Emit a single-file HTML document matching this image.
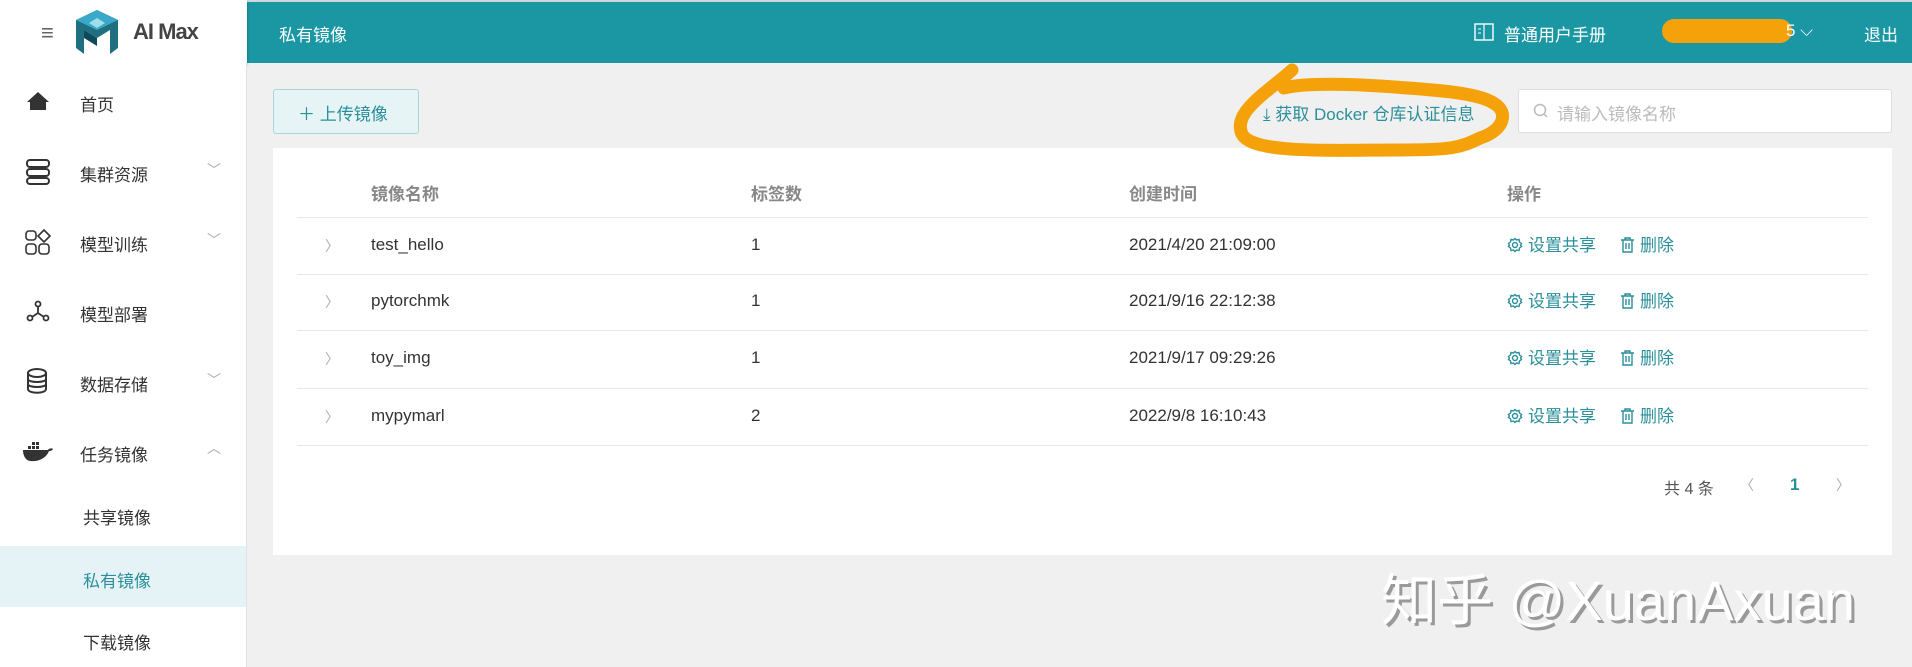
<!DOCTYPE html>
<html><head><meta charset="utf-8"><style>
*{margin:0;padding:0;box-sizing:border-box}
body{width:1912px;height:667px;overflow:hidden;background:#f0f0f0;font-family:"Liberation Sans","Noto Sans CJK SC",sans-serif;font-size:17px;color:#333;position:relative}
.a{position:absolute;white-space:nowrap}
.top{position:absolute;left:0;top:0;width:1912px;height:63px;background:#1a97a3;border-top:2px solid #cfd8da}
.logo{position:absolute;left:0;top:0;width:247px;height:63px;background:#fff;box-shadow:0 2px 3px rgba(0,0,0,.3)}
.side{position:absolute;left:0;top:63px;width:247px;height:604px;background:#fff;border-right:1px solid #e3e3e3}
.card{position:absolute;left:273px;top:148px;width:1619px;height:407px;background:#fff}
.line{position:absolute;left:297px;width:1571px;height:1px;background:#e8e8e8}
.teal{color:#2a8f9a}
.chev{color:#aaa;font-size:14px}
.op svg{vertical-align:-2px;margin-right:5px}
</style></head><body>
<div class="top"></div>
<div class="logo">
 <div class="a" style="left:41px;top:20px;font-size:22px;color:#666">≡</div>
 <svg class="a" style="left:72px;top:8px" width="50" height="50" viewBox="0 0 50 50">
  <polygon points="25,2 46,12 46,40 38,46 38,22 25,30 12,22 12,46 4,40 4,12" fill="#1f6f80"/>
  <polygon points="25,2 46,12 25,22 4,12" fill="#3aa9c9"/>
  <polygon points="25,10 33,15 25,20 17,15" fill="#9de0ea"/>
  <polygon points="12,22 25,30 25,38 12,30" fill="#0f4a5a"/>
 </svg>
 <div class="a" style="left:133px;top:19px;font-size:22px;font-weight:bold;color:#444;letter-spacing:-1px">AI Max</div>
</div>
<div class="a" style="left:279px;top:21px;color:#fff">私有镜像</div>
<svg class="a" style="left:1474px;top:23px" width="20" height="18" viewBox="0 0 20 18"><rect x="1" y="1" width="18" height="16" fill="none" stroke="#fff" stroke-width="1.4"/><line x1="10" y1="1" x2="10" y2="17" stroke="#fff" stroke-width="1.2"/><line x1="4" y1="6" x2="7" y2="6" stroke="#fff"/><line x1="4" y1="10" x2="7" y2="10" stroke="#fff"/></svg>
<div class="a" style="left:1504px;top:21px;color:#fff">普通用户手册</div>
<div class="a" style="left:1662px;top:19px;width:130px;height:24px;background:#f5a20a;border-radius:12px"></div>
<div class="a" style="left:1786px;top:21px;color:#fff">5 ⌵</div>
<div class="a" style="left:1864px;top:21px;color:#fff">退出</div>

<div class="side">
 <svg class="a" style="left:26px;top:28px" width="24" height="20" viewBox="0 0 24 20"><path d="M12 1 L23 11 L20 11 L20 19 L4 19 L4 11 L1 11Z M9 19 L9 13 L15 13 L15 19" fill="#333"/></svg>
 <div class="a" style="left:80px;top:28px">首页</div>
 <svg class="a" style="left:25px;top:96px" width="26" height="26" viewBox="0 0 26 26" fill="none" stroke="#333" stroke-width="2"><rect x="2" y="1" width="22" height="7" rx="3"/><rect x="2" y="10" width="22" height="7" rx="3"/><rect x="2" y="19" width="22" height="6" rx="3"/></svg>
 <div class="a" style="left:80px;top:98px">集群资源</div><div class="a chev" style="left:207px;top:97px">﹀</div>
 <svg class="a" style="left:25px;top:166px" width="26" height="26" viewBox="0 0 26 26" fill="none" stroke="#333" stroke-width="1.6"><rect x="1" y="2" width="10" height="9" rx="3"/><path d="M19 1 L25 7 L19 13 L13 7Z"/><rect x="1" y="15" width="10" height="10" rx="3"/><rect x="14" y="15" width="10" height="10" rx="3"/></svg>
 <div class="a" style="left:80px;top:168px">模型训练</div><div class="a chev" style="left:207px;top:167px">﹀</div>
 <svg class="a" style="left:26px;top:237px" width="24" height="22" viewBox="0 0 24 22" fill="none" stroke="#333" stroke-width="1.8"><circle cx="12" cy="4" r="2.5"/><circle cx="4" cy="18" r="2.5"/><circle cx="20" cy="18" r="2.5"/><path d="M12 7 L12 13 M12 13 L6 17 M12 13 L18 17"/></svg>
 <div class="a" style="left:80px;top:238px">模型部署</div>
 <svg class="a" style="left:26px;top:305px" width="22" height="26" viewBox="0 0 22 26" fill="none" stroke="#333" stroke-width="2"><ellipse cx="11" cy="5" rx="9" ry="4"/><path d="M2 5 V21 C2 26 20 26 20 21 V5 M2 11 C2 15 20 15 20 11 M2 16 C2 20 20 20 20 16"/></svg>
 <div class="a" style="left:80px;top:308px">数据存储</div><div class="a chev" style="left:207px;top:307px">﹀</div>
 <svg class="a" style="left:22px;top:377px" width="32" height="22" viewBox="0 0 32 22" fill="#333"><rect x="6" y="6" width="3" height="3"/><rect x="10" y="6" width="3" height="3"/><rect x="14" y="6" width="3" height="3"/><rect x="10" y="2" width="3" height="3"/><rect x="14" y="2" width="3" height="3"/><path d="M1 10 H26 C27 8 30 8 31 9 C30 11 28 11 27 11 C24 19 15 22 8 21 C3 20 1 15 1 10Z"/></svg>
 <div class="a" style="left:80px;top:378px">任务镜像</div><div class="a chev" style="left:207px;top:375px">︿</div>
 <div class="a" style="left:83px;top:441px">共享镜像</div>
 <div class="a" style="left:0;top:483px;width:246px;height:61px;background:#e6f3f6"></div>
 <div class="a teal" style="left:83px;top:504px">私有镜像</div>
 <div class="a" style="left:83px;top:566px">下载镜像</div>
</div>

<div class="a" style="left:273px;top:89px;width:146px;height:45px;background:#e6f4f6;border:1px solid #a9d6db;border-radius:3px"></div>
<div class="a teal" style="left:298px;top:100px">＋ 上传镜像</div>
<div class="a teal" style="left:1263px;top:100px">⤓ 获取 Docker 仓库认证信息</div>
<div class="a" style="left:1518px;top:89px;width:374px;height:44px;background:#fff;border:1px solid #ddd;border-radius:3px"></div>
<svg class="a" style="left:1533px;top:103px" width="16" height="16" viewBox="0 0 16 16" fill="none" stroke="#bbb" stroke-width="1.5"><circle cx="7" cy="7" r="5.5"/><path d="M11 11 L14 14"/></svg>
<div class="a" style="left:1557px;top:100px;color:#bbb">请输入镜像名称</div>

<div class="card"></div>
<div style="color:#888;font-weight:bold">
<div class="a" style="left:371px;top:180px">镜像名称</div>
<div class="a" style="left:751px;top:180px">标签数</div>
<div class="a" style="left:1129px;top:180px">创建时间</div>
<div class="a" style="left:1507px;top:180px">操作</div>
</div>
<div class="line" style="top:217px"></div>
<div class="line" style="top:274px"></div>
<div class="line" style="top:330px"></div>
<div class="line" style="top:388px"></div>
<div class="line" style="top:445px"></div>

<div class="a chev" style="left:325px;top:236px">〉</div><div class="a" style="left:371px;top:235px">test_hello</div><div class="a" style="left:751px;top:235px">1</div><div class="a" style="left:1129px;top:235px">2021/4/20 21:09:00</div>
<div class="a chev" style="left:325px;top:292px">〉</div><div class="a" style="left:371px;top:291px">pytorchmk</div><div class="a" style="left:751px;top:291px">1</div><div class="a" style="left:1129px;top:291px">2021/9/16 22:12:38</div>
<div class="a chev" style="left:325px;top:349px">〉</div><div class="a" style="left:371px;top:348px">toy_img</div><div class="a" style="left:751px;top:348px">1</div><div class="a" style="left:1129px;top:348px">2021/9/17 09:29:26</div>
<div class="a chev" style="left:325px;top:407px">〉</div><div class="a" style="left:371px;top:406px">mypymarl</div><div class="a" style="left:751px;top:406px">2</div><div class="a" style="left:1129px;top:406px">2022/9/8 16:10:43</div>

<div class="teal op">
<div class="a" style="left:1507px;top:231px"><svg width="16" height="16" viewBox="0 0 16 16" fill="none" stroke="#2a8f9a" stroke-width="1.4"><circle cx="8" cy="8" r="2.5"/><path d="M8 1.5 L9.5 3 L12 2.5 L12.5 5 L14.5 6.5 L13.5 8 L14.5 9.5 L12.5 11 L12 13.5 L9.5 13 L8 14.5 L6.5 13 L4 13.5 L3.5 11 L1.5 9.5 L2.5 8 L1.5 6.5 L3.5 5 L4 2.5 L6.5 3Z"/></svg>设置共享</div>
<div class="a" style="left:1620px;top:231px"><svg width="15" height="16" viewBox="0 0 15 16" fill="none" stroke="#2a8f9a" stroke-width="1.4"><path d="M1 3 H14 M5 3 V1 H10 V3 M3 3 V15 H12 V3 M6 6 V12 M9 6 V12"/></svg>删除</div>
<div class="a" style="left:1507px;top:287px"><svg width="16" height="16" viewBox="0 0 16 16" fill="none" stroke="#2a8f9a" stroke-width="1.4"><circle cx="8" cy="8" r="2.5"/><path d="M8 1.5 L9.5 3 L12 2.5 L12.5 5 L14.5 6.5 L13.5 8 L14.5 9.5 L12.5 11 L12 13.5 L9.5 13 L8 14.5 L6.5 13 L4 13.5 L3.5 11 L1.5 9.5 L2.5 8 L1.5 6.5 L3.5 5 L4 2.5 L6.5 3Z"/></svg>设置共享</div>
<div class="a" style="left:1620px;top:287px"><svg width="15" height="16" viewBox="0 0 15 16" fill="none" stroke="#2a8f9a" stroke-width="1.4"><path d="M1 3 H14 M5 3 V1 H10 V3 M3 3 V15 H12 V3 M6 6 V12 M9 6 V12"/></svg>删除</div>
<div class="a" style="left:1507px;top:344px"><svg width="16" height="16" viewBox="0 0 16 16" fill="none" stroke="#2a8f9a" stroke-width="1.4"><circle cx="8" cy="8" r="2.5"/><path d="M8 1.5 L9.5 3 L12 2.5 L12.5 5 L14.5 6.5 L13.5 8 L14.5 9.5 L12.5 11 L12 13.5 L9.5 13 L8 14.5 L6.5 13 L4 13.5 L3.5 11 L1.5 9.5 L2.5 8 L1.5 6.5 L3.5 5 L4 2.5 L6.5 3Z"/></svg>设置共享</div>
<div class="a" style="left:1620px;top:344px"><svg width="15" height="16" viewBox="0 0 15 16" fill="none" stroke="#2a8f9a" stroke-width="1.4"><path d="M1 3 H14 M5 3 V1 H10 V3 M3 3 V15 H12 V3 M6 6 V12 M9 6 V12"/></svg>删除</div>
<div class="a" style="left:1507px;top:402px"><svg width="16" height="16" viewBox="0 0 16 16" fill="none" stroke="#2a8f9a" stroke-width="1.4"><circle cx="8" cy="8" r="2.5"/><path d="M8 1.5 L9.5 3 L12 2.5 L12.5 5 L14.5 6.5 L13.5 8 L14.5 9.5 L12.5 11 L12 13.5 L9.5 13 L8 14.5 L6.5 13 L4 13.5 L3.5 11 L1.5 9.5 L2.5 8 L1.5 6.5 L3.5 5 L4 2.5 L6.5 3Z"/></svg>设置共享</div>
<div class="a" style="left:1620px;top:402px"><svg width="15" height="16" viewBox="0 0 15 16" fill="none" stroke="#2a8f9a" stroke-width="1.4"><path d="M1 3 H14 M5 3 V1 H10 V3 M3 3 V15 H12 V3 M6 6 V12 M9 6 V12"/></svg>删除</div>
</div>

<div class="a" style="left:1664px;top:475px;font-size:16px;color:#555">共 4 条</div>
<div class="a chev" style="left:1740px;top:475px">〈</div>
<div class="a teal" style="left:1790px;top:475px;font-weight:bold">1</div>
<div class="a chev" style="left:1836px;top:475px">〉</div>

<svg class="a" style="left:0;top:0" width="1912" height="667"><path d="M1292,70 C1268,92 1232,112 1242,134 C1252,154 1330,150 1400,150 C1450,150 1460,148 1480,138 C1505,130 1508,112 1495,104 C1480,93 1440,90 1380,86 C1330,83 1300,84 1284,88" fill="none" stroke="#f5a20a" stroke-width="13" stroke-linecap="round"/></svg>

<div class="a" style="left:1381px;top:556px;font-size:56px;color:#fff;text-shadow:3px 3px 0 #9a9a9a">知乎 @XuanAxuan</div>
</body></html>
